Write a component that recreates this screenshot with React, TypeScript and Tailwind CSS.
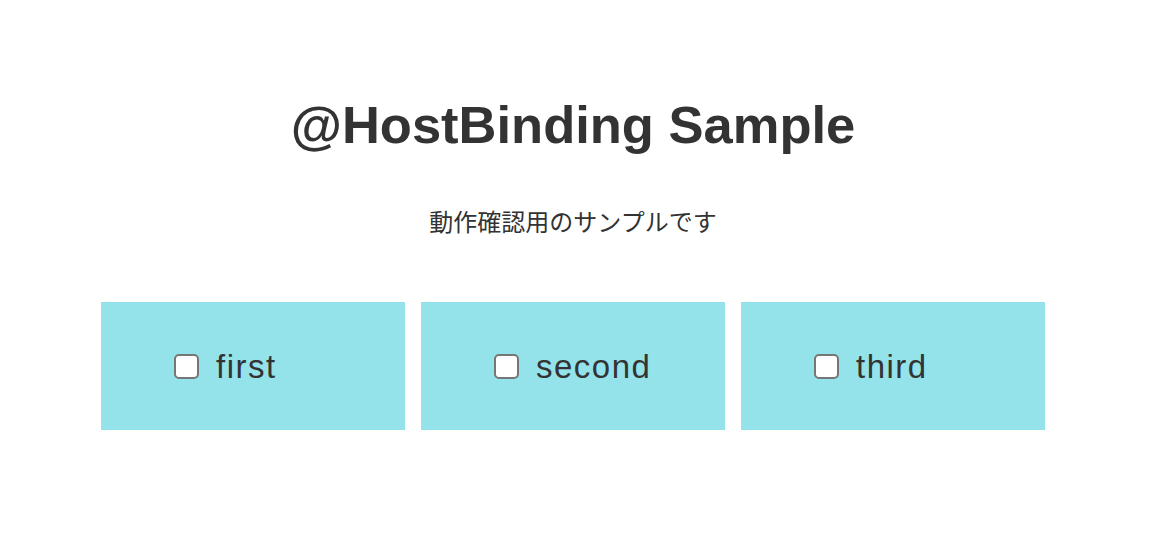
const items = ['first', 'second', 'third'];

export default function App() {
  return (
    <div className="w-[1146px] min-h-[538px] bg-white text-[#333333] font-['Liberation_Sans',Arial,sans-serif]">
      <h1 className="pt-[99px] text-center text-[52.5px] leading-[52px] font-bold">
        @HostBinding Sample
      </h1>
      <p className="mt-[58px] text-center text-[24px] leading-none font-['Noto_Sans_CJK_JP','Liberation_Sans',sans-serif]">
        動作確認用のサンプルです
      </p>

      {/* checkbox cards */}
      <div className="mt-[69px] flex justify-center gap-4">
        {items.map((name) => (
          <label
            key={name}
            className="flex h-[128px] w-[304px] items-center bg-[#95e3ea] pl-[73px]"
          >
            <input
              type="checkbox"
              className="h-[25px] w-[25px] appearance-none rounded-[5px] border-2 border-[#767676] bg-white"
            />
            <span className="ml-[17px] text-[33px] leading-none tracking-[1.5px]">{name}</span>
          </label>
        ))}
      </div>
    </div>
  );
}
